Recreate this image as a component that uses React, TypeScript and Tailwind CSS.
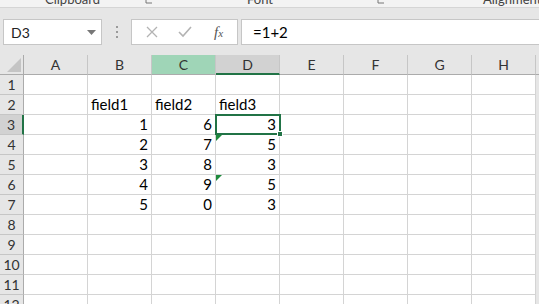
import React from 'react';

const cols = ['A', 'B', 'C', 'D', 'E', 'F', 'G', 'H'];

// cell values by row, keyed on column letter
const data: Record<number, Record<string, string>> = {
  2: { B: 'field1', C: 'field2', D: 'field3' },
  3: { B: '1', C: '6', D: '3' },
  4: { B: '2', C: '7', D: '5' },
  5: { B: '3', C: '8', D: '3' },
  6: { B: '4', C: '9', D: '5' },
  7: { B: '5', C: '0', D: '3' },
};

const flagged = ['4-D', '6-D'];

const ColHeader = ({ col }: { col: string }) => {
  let cls = 'bg-[#e6e6e6] border-b border-b-[#ababab]';
  if (col === 'C') cls = 'bg-[#9fd5b7] border-b border-b-[#ababab]';
  if (col === 'D') cls = 'bg-[#d2d2d2] border-b-2 border-b-[#217346]';
  return (
    <div className={`w-[64px] h-[20px] shrink-0 border-r border-r-[#c6c6c6] flex items-center justify-center text-[14px] text-[#333] ${cls}`}>
      {col}
    </div>
  );
};

const Row = ({ n }: { n: number }) => {
  const row = data[n] || {};
  const active = n === 3;
  return (
    <div className={`flex h-[20px] relative ${active ? 'z-10' : ''}`}>
      <div
        className={`w-[24px] shrink-0 h-[20px] flex items-center justify-center text-[14px] text-[#333] border-b border-b-[#c6c6c6] ${
          active ? 'bg-[#d2d2d2] border-r-2 border-r-[#217346]' : 'bg-[#e6e6e6] border-r border-r-[#ababab]'
        }`}
      >
        {n}
      </div>
      {cols.map((c) => {
        const v = row[c];
        const isNum = v !== undefined && /^\d+$/.test(v);
        return (
          <div
            key={c}
            className={`relative w-[64px] shrink-0 h-[20px] bg-white border-r border-b border-[#d4d4d4] flex items-center px-[3px] text-[15px] text-black ${
              isNum ? 'justify-end' : 'justify-start'
            }`}
          >
            {v}
            {flagged.includes(`${n}-${c}`) && (
              <div className="absolute left-0 top-0 w-0 h-0 border-t-[6px] border-r-[6px] border-t-[#1e8a3c] border-r-transparent" />
            )}
            {active && c === 'D' && (
              <div className="absolute z-10 -left-[1px] -top-[1px] w-[66px] h-[21px] border-2 border-[#217346]">
                <div className="absolute -right-[4px] -bottom-[4px] w-[6px] h-[6px] bg-[#217346] border border-white" />
              </div>
            )}
          </div>
        );
      })}
    </div>
  );
};

export default function App() {
  return (
    <div className="w-[539px] h-[304px] overflow-hidden bg-[#e6e6e6] font-['Lato','Noto_Sans',sans-serif] select-none">
      {/* ribbon group labels, cut off at the top */}
      <div className="h-[8px] bg-[#f3f3f3] border-b border-[#d5d5d5] flex items-end overflow-hidden text-[13px] text-[#444] leading-none">
        <div className="flex items-end h-[20px] -mb-[1px] pb-[2px]">
          <span className="ml-[45px] w-[100px]">Clipboard</span>
          <svg width="10" height="8" className="mb-[1px]">
            <path d="M1 0v6h6" stroke="#777" fill="none" />
          </svg>
          <span className="ml-[92px] w-[130px]">Font</span>
          <svg width="10" height="8" className="mb-[1px]">
            <path d="M1 0v6h6" stroke="#777" fill="none" />
          </svg>
          <span className="ml-[96px]">Alignment</span>
        </div>
      </div>

      {/* formula bar */}
      <div className="h-[47px] flex items-start pt-[11px]">
        <div className="ml-[3px] w-[99px] h-[26px] bg-white border border-[#c6c6c6] flex items-center pl-[7px] pr-[5px] text-[14px] text-[#222]">
          <span className="flex-1">D3</span>
          <svg width="9" height="5">
            <path d="M0 0h9L4.5 5z" fill="#777" />
          </svg>
        </div>
        <div className="w-[29px] h-[26px] flex flex-col items-center justify-center gap-[3px]">
          <div className="w-[2px] h-[2px] bg-[#9a9a9a]" />
          <div className="w-[2px] h-[2px] bg-[#9a9a9a]" />
          <div className="w-[2px] h-[2px] bg-[#9a9a9a]" />
        </div>
        <div className="w-[107px] h-[26px] bg-white border border-[#c6c6c6] flex items-center">
          <svg width="12" height="12" className="ml-[14px]">
            <path d="M1 1l10 10M11 1L1 11" stroke="#b3b3b3" strokeWidth="1.3" />
          </svg>
          <svg width="14" height="12" className="ml-[20px]">
            <path d="M1 6l4 4 8-9" stroke="#b3b3b3" strokeWidth="1.6" fill="none" />
          </svg>
          <span className="ml-[22px] font-['Liberation_Serif',serif] italic text-[15px] text-[#555] leading-none">
            f<span className="text-[11px]">x</span>
          </span>
        </div>
        <div className="ml-[3px] flex-1 h-[26px] bg-white border border-[#c6c6c6] border-r-0 flex items-center pl-[11px] text-[15px] text-black">
          =1+2
        </div>
      </div>

      {/* sheet */}
      <div className="flex h-[20px]">
        <div className="w-[24px] shrink-0 h-[20px] bg-[#e6e6e6] border-r border-b border-[#ababab] flex items-end justify-end pr-[2px] pb-[2px]">
          <svg width="14" height="14">
            <path d="M14 0v14H0z" fill="#c4c4c4" />
          </svg>
        </div>
        {cols.map((c) => (
          <ColHeader key={c} col={c} />
        ))}
        <div className="flex-1 bg-[#e6e6e6] border-b border-[#ababab]" />
      </div>
      {Array.from({ length: 12 }, (_, i) => (
        <Row key={i} n={i + 1} />
      ))}
    </div>
  );
}
